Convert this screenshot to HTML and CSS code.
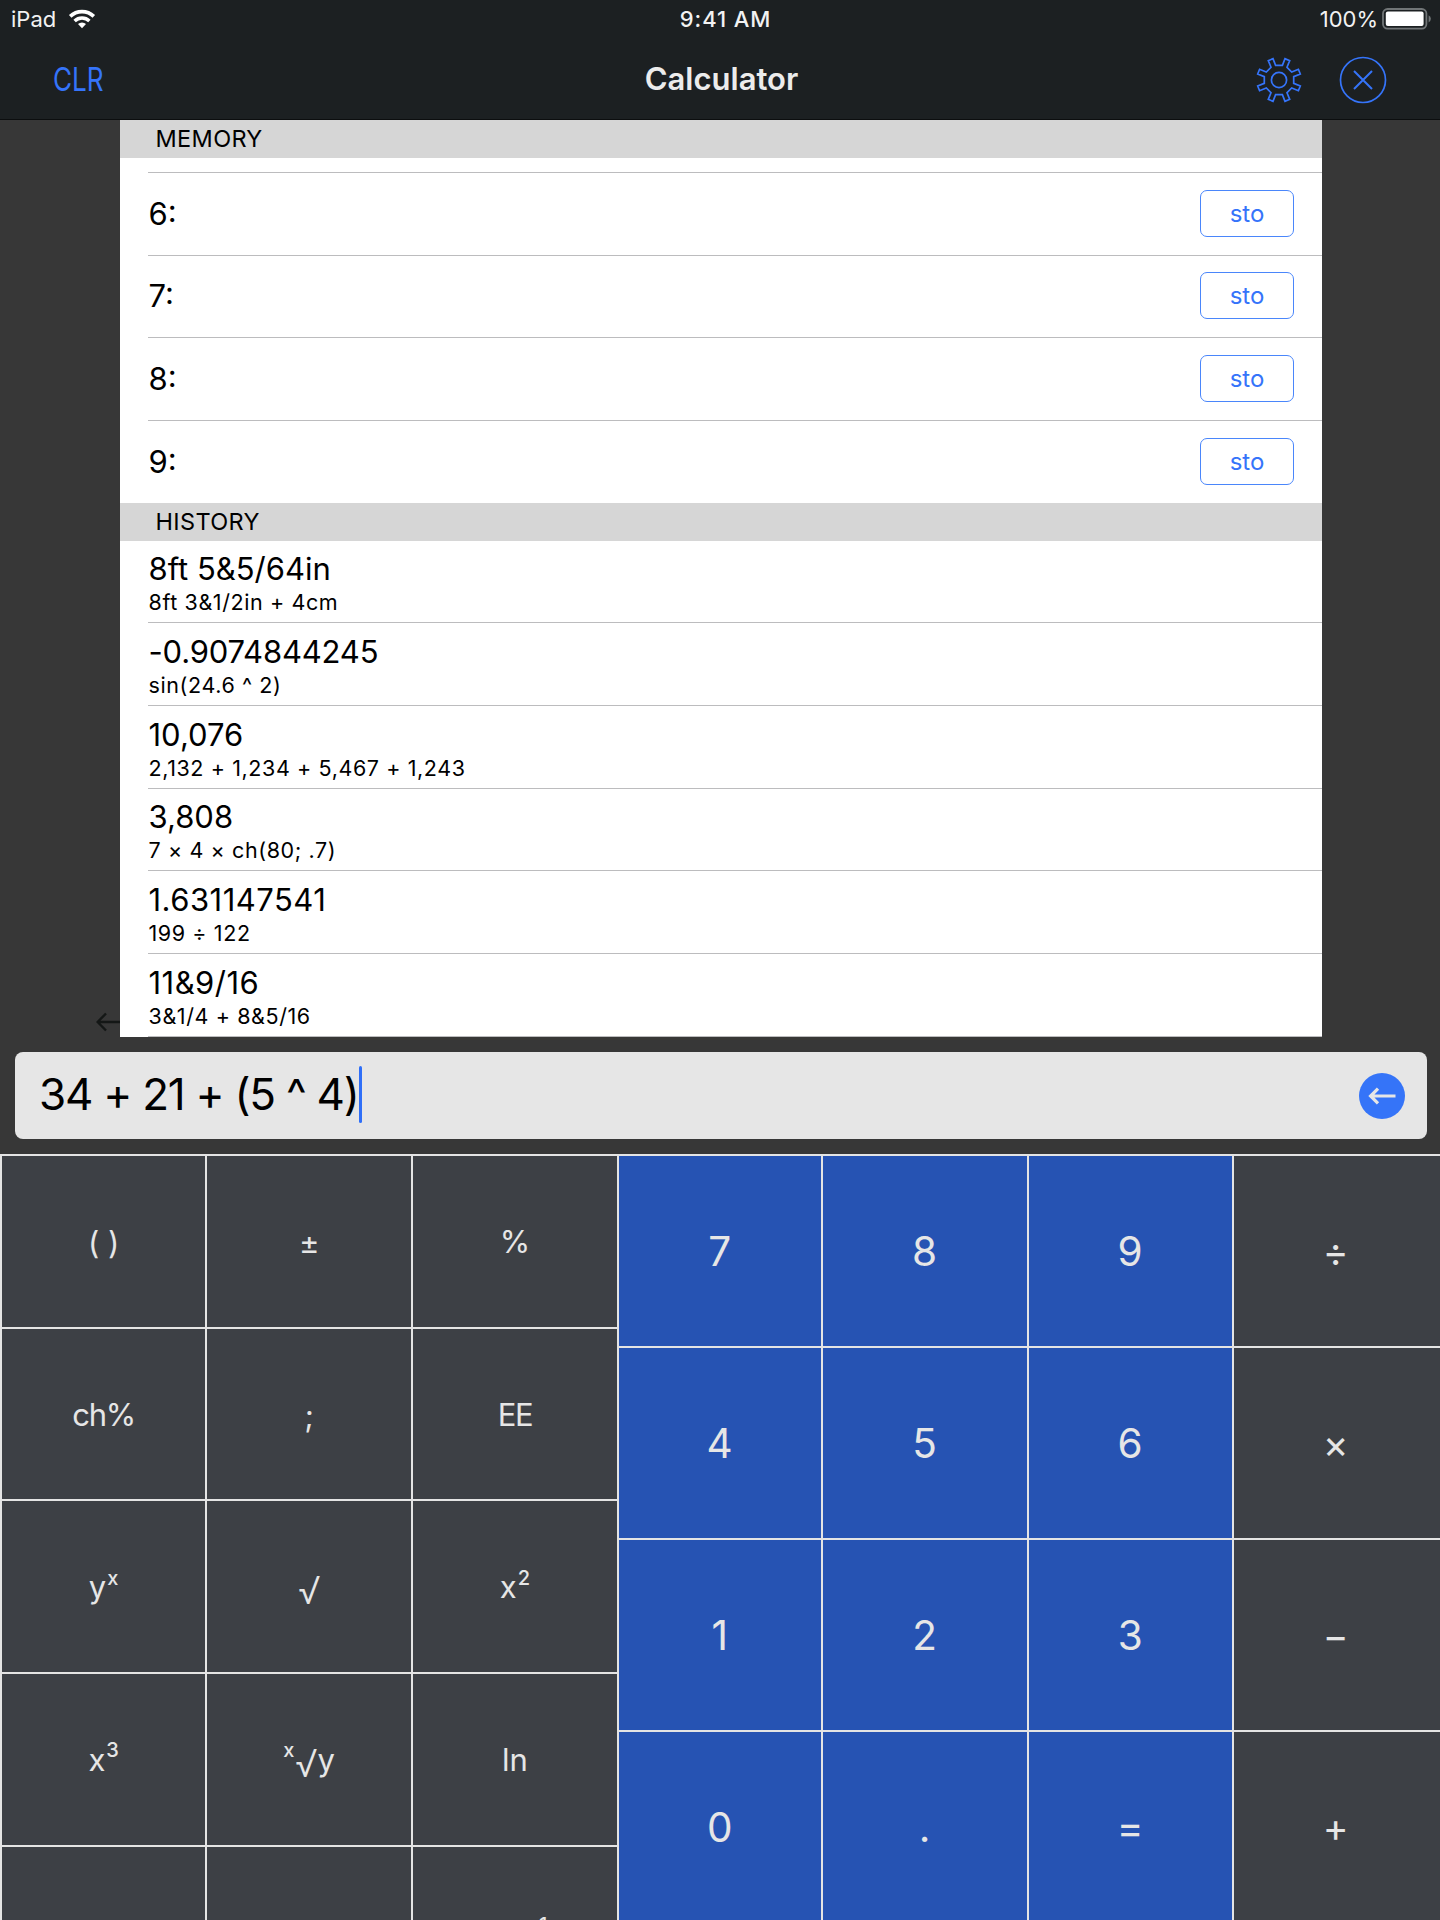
FILE: index.html
```html
<!DOCTYPE html>
<html lang="en">
<head>
  <meta charset="UTF-8">
  <title>Calculator</title>
  <link rel="stylesheet" href="styles.css">
</head>
<body>

<!-- Header -->
<div class="header">
  <div class="status-bar">
    <div class="status-left">
      <span>iPad</span>
      <svg class="wifi" width="28" height="20" viewBox="0 0 28 20">
        <path d="M2.2 7.4a17 17 0 0 1 23.6 0" fill="none" stroke="#fff" stroke-width="3.6"/>
        <path d="M6.6 12a10.6 10.6 0 0 1 14.8 0" fill="none" stroke="#fff" stroke-width="3.4"/>
        <path d="M14 19.2l-4-4.2a5.8 5.8 0 0 1 8 0z" fill="#fff"/>
      </svg>
    </div>
    <div class="time">9:41 AM</div>
    <div class="status-right">
      <span>100%</span>
      <svg class="battery" width="51" height="22" viewBox="0 0 51 22">
        <rect x="1" y="1" width="43.4" height="19.6" rx="4.6" fill="none" stroke="#717577" stroke-width="1.8"/>
        <rect x="3.8" y="3.6" width="37.8" height="14.4" rx="2" fill="#fff"/>
        <path d="M46.6 7.2a4 4 0 0 1 0 7.2z" fill="#717577"/>
      </svg>
    </div>
  </div>
  <div class="nav-bar">
    <a href="#" class="clear">CLR</a>
    <h1>Calculator</h1>
    <div class="nav-icons">
      <svg width="46" height="46" viewBox="-23 -23 46 46">
        <path d="M-3.4-14.7H3.4L6-21.3l4.7 1.9L8-12.7 12.7-8l6.7-2.7L21.3-6l-6.6 2.6V3.4L21.3 6l-1.9 4.7L12.7 8 8 12.7l2.7 6.7L6 21.3 3.4 14.7H-3.4L-6 21.3l-4.7-1.9L-8 12.7-12.7 8l-6.7 2.7L-21.3 6l6.6-2.6V-3.4L-21.3-6l1.9-4.7L-12.7-8-8-12.7l-2.7-6.7L-6-21.3z"/>
        <circle r="7.6"/>
      </svg>
      <svg width="48" height="48" viewBox="-24 -24 48 48">
        <circle r="22.5"/>
        <path d="M-9-9L9 9M9-9L-9 9" stroke-width="2"/>
      </svg>
    </div>
  </div>
</div>

<!-- Memory and history -->
<div class="main">
  <svg class="back-arrow" width="26" height="20" viewBox="0 0 26 20"><path d="M26 10H2M10 1.5L1.6 10l8.4 8.5"/></svg>
  <div class="panel">
    <h2>MEMORY</h2>
    <div class="memory">
      <div class="memory-row"><span>6:</span><button>sto</button></div>
      <div class="memory-row"><span>7:</span><button>sto</button></div>
      <div class="memory-row"><span>8:</span><button>sto</button></div>
      <div class="memory-row"><span>9:</span><button>sto</button></div>
    </div>
    <h2>HISTORY</h2>
    <ul class="history">
      <li><strong>8ft 5&amp;5/64in</strong><span>8ft 3&amp;1/2in + 4cm</span></li>
      <li><strong class="tight">-0.9074844245</strong><span>sin(24.6 ^ 2)</span></li>
      <li><strong>10,076</strong><span>2,132 + 1,234 + 5,467 + 1,243</span></li>
      <li><strong>3,808</strong><span>7 × 4 × ch(80; .7)</span></li>
      <li><strong class="loose">1.631147541</strong><span>199 ÷ 122</span></li>
      <li><strong class="loose">11&amp;9/16</strong><span>3&amp;1/4 + 8&amp;5/16</span></li>
    </ul>
  </div>
</div>

<!-- Expression input -->
<div class="entry">
  <div class="expression">34 + 21 + (5 ^ 4)</div>
  <div class="cursor"></div>
  <svg class="backspace" width="46" height="46" viewBox="0 0 46 46">
    <circle cx="23" cy="23" r="23" fill="#3574f8"/>
    <path d="M36.5 23H12M19 15.6L11.6 23l7.4 7.4" fill="none" stroke="#e6e6e6" stroke-width="3.2"/>
  </svg>
</div>

<!-- Keypad -->
<div class="keypad">
  <div class="functions">
    <div class="key sign">( )</div>
    <div class="key sign">±</div>
    <div class="key">%</div>
    <div class="key narrow">ch%</div>
    <div class="key sign">;</div>
    <div class="key narrow">EE</div>
    <div class="key">y<sup>x</sup></div>
    <div class="key"><span class="radical">√</span></div>
    <div class="key">x<sup>2</sup></div>
    <div class="key">x<sup>3</sup></div>
    <div class="key root"><sup>x</sup><span class="radical">√</span>y</div>
    <div class="key">ln</div>
    <div class="key"></div>
    <div class="key"></div>
    <div class="key inverse">sin<sup>-1</sup></div>
  </div>
  <div class="numpad">
    <div class="key number">7</div>
    <div class="key number">8</div>
    <div class="key number">9</div>
    <div class="key operator">÷</div>
    <div class="key number">4</div>
    <div class="key number">5</div>
    <div class="key number">6</div>
    <div class="key operator">×</div>
    <div class="key number">1</div>
    <div class="key number">2</div>
    <div class="key number">3</div>
    <div class="key operator">−</div>
    <div class="key number">0</div>
    <div class="key number">.</div>
    <div class="key number">=</div>
    <div class="key operator">+</div>
  </div>
</div>

</body>
</html>
```
FILE: styles.css
```css
* { margin: 0; padding: 0; box-sizing: border-box; }
body {
  width: 1440px;
  height: 1920px;
  overflow: hidden;
  display: flex;
  flex-direction: column;
  font-family: Inter, "Liberation Sans", sans-serif;
  background: #373737;
  color: #000;
}

/* Header */
.header {
  height: 120px;
  flex: none;
  background: #1c2022;
  border-bottom: 1px solid #0c0e0f;
  color: #f2f2f2;
}
.status-bar {
  height: 38px;
  display: grid;
  grid-template-columns: 1fr auto 1fr;
  align-items: center;
  padding: 0 7px 0 11px;
  font-size: 22px;
}
.status-left { display: flex; align-items: center; gap: 12px; }
.time { font-weight: 500; letter-spacing: 0.9px; margin-left: 7px; }
.status-right { display: flex; align-items: center; justify-content: flex-end; gap: 4px; }
.nav-bar {
  height: 80px;
  display: grid;
  grid-template-columns: 1fr auto 1fr;
  align-items: center;
  padding: 0 53px 0 53px;
}
.clear {
  justify-self: start;
  padding-top: 2px;
  font-size: 33px;
  color: #3574fa;
  text-decoration: none;
  transform: scaleX(0.79);
  transform-origin: left;
}
h1 {
  margin-left: 3px;
  font-size: 31px;
  font-weight: 600;
  color: #ececec;
}
.nav-icons {
  display: flex;
  align-items: center;
  justify-content: flex-end;
  gap: 37px;
  margin-top: 4px;
}
.nav-icons svg { fill: none; stroke: #3574fa; stroke-width: 1.7; }

/* Memory and history */
.main {
  position: relative;
  height: 932px;
  flex: none;
}
.back-arrow {
  position: absolute;
  left: 96px;
  top: 892px;
  fill: none;
  stroke: #141716;
  stroke-width: 2.4;
}
.panel {
  position: relative;
  width: 1202px;
  height: 917px;
  margin-left: 120px;
  background: #fff;
  overflow: hidden;
}
h2 {
  height: 37.5px;
  line-height: 37.5px;
  padding-left: 35.5px;
  background: #d6d6d6;
  font-size: 23.5px;
  font-weight: 400;
  letter-spacing: 0.35px;
}
.memory { height: 345.5px; padding-top: 14.5px; }
.memory-row {
  display: flex;
  justify-content: space-between;
  align-items: center;
  height: 82.6px;
  margin-left: 28px;
  padding: 0 28px 1px 0.5px;
  border-top: 1px solid #bcbcbe;
  font-size: 31px;
}
.memory-row button {
  width: 94px;
  height: 47px;
  border: 1px solid #4a86fb;
  border-radius: 7px;
  background: none;
  color: #3574fa;
  font: 24px Inter, "Liberation Sans", sans-serif;
}
.history { list-style: none; }
.history li {
  height: 82.7px;
  margin-left: 28px;
  padding: 9.8px 0 0 0.5px;
  border-bottom: 1px solid #bcbcbe;
}
.history strong {
  display: block;
  font-size: 31px;
  font-weight: 400;
  line-height: 38px;
}
.history .tight { letter-spacing: -0.18px; }
.history .loose { letter-spacing: 0.48px; }
.history span {
  display: block;
  font-size: 21.5px;
  line-height: 28.5px;
  letter-spacing: 0.6px;
}

/* Expression input */
.entry {
  display: flex;
  align-items: center;
  height: 87px;
  flex: none;
  margin: 0 13px 15px 15px;
  padding: 0 22px 3px 24px;
  border-radius: 8px;
  background: #e6e6e6;
}
.expression {
  font-size: 44px;
  letter-spacing: -1.25px;
}
.cursor {
  width: 3.5px;
  height: 57px;
  border-radius: 2px;
  background: #2f6ff8;
}
.backspace { margin: 3px 0 0 auto; }

/* Keypad */
.keypad {
  display: flex;
  flex: none;
  height: 766px;
  overflow: hidden;
}
.functions {
  display: grid;
  width: 617px;
  grid-template-columns: 205.3px 205.7px 1fr;
  grid-auto-rows: 172.7px;
}
.numpad {
  display: grid;
  grid-template-columns: 204.4px 205.5px 205.5px 207.6px;
  grid-auto-rows: 192px;
}
.key {
  display: flex;
  align-items: center;
  justify-content: center;
  border-top: 2px solid #e4e4e4;
  border-left: 2px solid #e4e4e4;
  background: #3d4045;
  color: #e6e6e6;
  font-size: 31px;
  font-weight: 400;
}
.key sup {
  margin-left: 1px;
  font-size: 20px;
  font-weight: 500;
  transform: translateY(-9px);
}
.narrow { letter-spacing: -1.3px; }
.sign { padding-top: 3px; }
.radical { font-weight: 300; transform: translateY(3px) scale(1.15, 1.25); }
.root sup { margin: 0 3px 0 0; }
.root .radical { margin-right: 1px; }
.inverse { padding: 4px 0 0 4px; }
.number {
  padding-right: 1px;
  background: #2653b3;
  font-size: 40.5px;
}
.operator { padding-right: 3px; font-size: 39px; }
```
